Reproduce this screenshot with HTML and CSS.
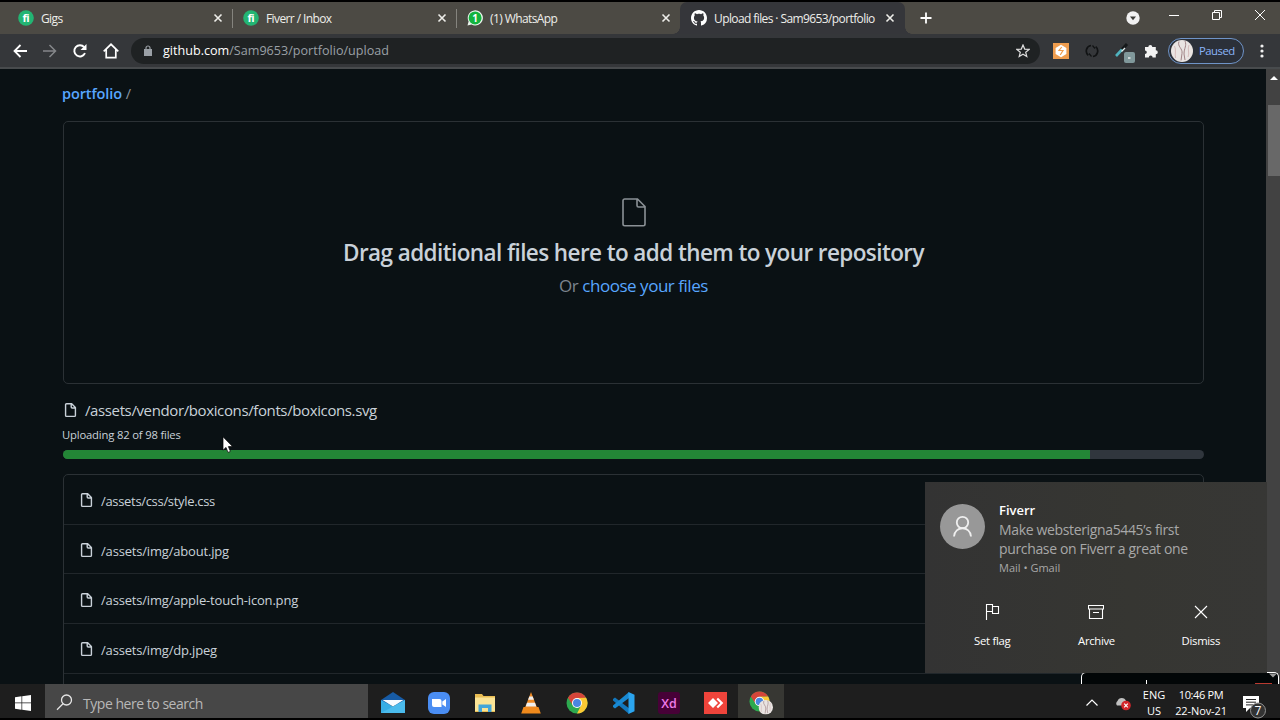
FILE: index.html
```html
<!DOCTYPE html>
<html lang="en">
<head>
  <meta charset="UTF-8" />
  <meta name="viewport" content="width=device-width, initial-scale=1.0"/>
  <title>Upload files · Sam9653/portfolio</title>
  <link rel="stylesheet" href="styles.css">
</head>
<body>
  <!-- shared icons -->
  <svg class="defs" width="0" height="0">
    <symbol id="file" viewBox="0 0 16 16">
      <path fill="currentColor" d="M3.75 1.5a.25.25 0 00-.25.25v11.5c0 .138.112.25.25.25h8.5a.25.25 0 00.25-.25V6H9.75A1.75 1.75 0 018 4.25V1.5H3.75zm5.75.56v2.19c0 .138.112.25.25.25h2.19L9.5 2.06zM2 1.75C2 .784 2.784 0 3.75 0h5.086c.464 0 .909.184 1.237.513l3.414 3.414c.329.328.513.773.513 1.237v8.086A1.75 1.75 0 0112.25 15h-8.5A1.75 1.75 0 012 13.25V1.75z"/>
    </symbol>
    <symbol id="close" viewBox="0 0 10 10">
      <path d="M1.5 1.5l7 7M8.5 1.5l-7 7" stroke="currentColor" stroke-width="1.6"/>
    </symbol>
    <symbol id="chrome" viewBox="0 0 22 22">
      <circle cx="11" cy="11" r="10.5" fill="#2da94f"/>
      <path d="M1.9 5.75A10.5 10.5 0 0 1 20.1 5.75L11 6.2 6.9 13.4z" fill="#d5453a"/>
      <path d="M20.1 5.75A10.5 10.5 0 0 1 11 21.5L15.2 13.3 11 6z" fill="#fcc934"/>
      <circle cx="11" cy="11" r="5" fill="#fff"/>
      <circle cx="11" cy="11" r="4" fill="#4a86e0"/>
    </symbol>
    <symbol id="avatar" viewBox="0 0 22 22">
      <circle cx="11" cy="11" r="11" fill="#e9e4e2"/>
      <path d="M8 1.500c-2 5 4 7 3 12l-1 7M14 1c2 5-1 7-1 13l1 6" fill="none" stroke="#a08386"/>
      <path d="M3.500 6c2 4 0 8 1 12M18 5c-2 4 1 8-1 12" fill="none" stroke="#cfb0b0" stroke-width=".8"/>
    </symbol>
  </svg>

  <div class="tabs">
    <div class="tab">
      <svg class="favicon" viewBox="0 0 16 16"><circle cx="8" cy="8" r="7.8" fill="#23b573"/><text x="7.800" y="12" text-anchor="middle" font-size="11" font-weight="bold" letter-spacing="-.4" fill="#fff">fi</text></svg>
      <span class="tab-title">Gigs</span>
      <svg class="close"><use href="#close"/></svg>
    </div>
    <div class="tab divided">
      <svg class="favicon" viewBox="0 0 16 16"><circle cx="8" cy="8" r="7.8" fill="#23b573"/><text x="7.800" y="12" text-anchor="middle" font-size="11" font-weight="bold" letter-spacing="-.4" fill="#fff">fi</text></svg>
      <span class="tab-title">Fiverr / Inbox</span>
      <svg class="close"><use href="#close"/></svg>
    </div>
    <div class="tab divided">
      <svg class="favicon" viewBox="0 0 16 16">
        <path d="M.5 15.500l1.100-4A7.600 7.600 0 1 1 4.500 14.500z" fill="#e9f5ec"/>
        <circle cx="8.100" cy="7.900" r="6.500" fill="#13b33d"/>
        <text x="8" y="11.500" text-anchor="middle" font-size="10" font-weight="bold" fill="#fff">1</text>
      </svg>
      <span class="tab-title">(1) WhatsApp</span>
      <svg class="close"><use href="#close"/></svg>
    </div>
    <div class="tab active">
      <svg class="favicon" viewBox="0 0 16 16">
        <path fill="#fff" d="M8 0C3.580 0 0 3.580 0 8c0 3.540 2.290 6.530 5.470 7.590.4.070.55-.17.55-.38 0-.19-.01-.82-.01-1.490-2.010.37-2.530-.49-2.690-.94-.09-.23-.48-.94-.82-1.130-.28-.15-.68-.52-.01-.53.63-.01 1.080.58 1.230.82.72 1.210 1.870.87 2.330.66.070-.52.28-.87.51-1.070-1.780-.2-3.640-.89-3.640-3.950 0-.87.31-1.590.82-2.150-.08-.2-.36-1.020.08-2.120 0 0 .67-.21 2.200.82.64-.18 1.320-.27 2-.27s1.360.09 2 .27c1.530-1.040 2.200-.82 2.200-.82.44 1.100.16 1.920.08 2.120.51.56.82 1.270.82 2.150 0 3.070-1.870 3.750-3.650 3.950.29.25.54.73.54 1.480 0 1.070-.01 1.930-.01 2.200 0 .21.15.46.55.38A8.010 8.010 0 0 0 16 8c0-4.420-3.580-8-8-8z"/>
      </svg>
      <span class="tab-title">Upload files · Sam9653/portfolio</span>
      <svg class="close"><use href="#close"/></svg>
    </div>
    <svg class="new-tab" viewBox="0 0 12 12"><path d="M6 .5v11M.5 6h11" stroke="#fff" stroke-width="1.800"/></svg>
    <div class="window-buttons">
      <svg width="14" height="14" viewBox="0 0 14 14"><circle cx="7" cy="7" r="6.700" fill="#f1f1f1"/><path d="M4 5.500h6L7 9.200z" fill="#3c3c38"/></svg>
      <svg class="raised" width="10" height="10" viewBox="0 0 10 10"><path d="M0 5.500h10" stroke="#fff"/></svg>
      <svg class="raised" width="10" height="10" viewBox="0 0 10 10"><path d="M.5 2.500h7v7h-7zM2.500 2.500v-2h7v7h-2" fill="none" stroke="#fff"/></svg>
      <svg class="raised" width="10" height="10" viewBox="0 0 10 10"><path d="M0 0l10 10M10 0L0 10" stroke="#fff"/></svg>
    </div>
  </div>

  <div class="toolbar">
    <div class="nav">
      <svg width="14" height="14" viewBox="0 0 14 14"><path d="M7.500 1L1.500 7l6 6M1.500 7H14" fill="none" stroke="#fff" stroke-width="1.800"/></svg>
      <svg width="14" height="14" viewBox="0 0 14 14"><path d="M6.500 1l6 6-6 6M12.500 7H0" fill="none" stroke="#85878a" stroke-width="1.500"/></svg>
      <svg width="14" height="14" viewBox="0 0 14 14"><path d="M12 9.200A5.600 5.600 0 1 1 11.200 3.200" fill="none" stroke="#fff" stroke-width="1.900"/><path d="M13.500 0v6h-6z" fill="#fff"/></svg>
      <svg width="16" height="16" viewBox="0 0 16 16"><path d="M.7 8.300L8 1.300l7.300 7M3.200 6.500v8.200h9.600V6.500" fill="none" stroke="#fff" stroke-width="1.700"/></svg>
    </div>
    <div class="address">
      <svg width="8" height="11" viewBox="0 0 8 11"><path d="M0 4h8v7H0z" fill="#9aa0a6"/><path d="M2 4.500V3a2 2 0 0 1 4 0v1.500" fill="none" stroke="#9aa0a6" stroke-width="1.200"/></svg>
      <span class="url"><b>github.com</b>/Sam9653/portfolio/upload</span>
      <svg class="star" width="14" height="14" viewBox="0 0 14 14"><path d="M7 1l1.700 4.100 4.400.3-3.400 2.900 1.100 4.300L7 10.300l-3.800 2.300 1.100-4.300L.9 5.400l4.400-.3z" fill="none" stroke="#dedede" stroke-width="1.200"/></svg>
    </div>
    <div class="extensions">
      <svg width="16" height="16" viewBox="0 0 16 16"><path d="M0 0h16v16H0z" fill="#ef9d4e"/><path d="M8 1.800l5.400 3.100v6.200L8 14.200l-5.400-3.100V4.900z" fill="#fff"/><path d="M8.800 4L6 7.500h4L7.200 12" fill="none" stroke="#ef9d4e" stroke-width="1.200"/></svg>
      <svg width="14" height="14" viewBox="0 0 14 14"><path d="M3.300 11.300A5.600 5.600 0 0 1 6 1.500M10.700 2.700A5.600 5.600 0 0 1 8 12.500" fill="none" stroke="#111314" stroke-width="1.700"/><path d="M7.500 1.500l2.500 3M6.500 12.500L4 9.500" stroke="#111314" stroke-width="1.200"/></svg>
      <svg class="picker" width="20" height="20" viewBox="0 0 20 20"><path d="M1 13l6.500-7" stroke="#4fb3bf" stroke-width="2.600"/><path d="M7 6.500L12 1" stroke="#15181a" stroke-width="3"/><path d="M6.500 8.500L10 5" stroke="#e4f2f2" stroke-width="1.200"/><rect x="9" y="9" width="11" height="11" rx="2" fill="#80989b"/><path d="M13 15h2.500" stroke="#fff" stroke-width="1.200"/></svg>
      <svg width="14" height="14" viewBox="0 0 14 14"><path d="M1 3h3.300a2 2 0 1 1 4 0h3.500v3.200a2 2 0 1 1 0 4V13.500H8.600a1.900 1.900 0 0 0-3.800 0H1V10a1.800 1.800 0 0 0 0-3.600z" fill="#f3f3f3"/></svg>
    </div>
    <div class="profile">
      <svg width="22" height="22"><use href="#avatar"/></svg>
      <span>Paused</span>
    </div>
    <svg class="menu" width="4" height="14" viewBox="0 0 4 14"><circle cx="2" cy="2" r="1.600" fill="#f1f1f1"/><circle cx="2" cy="7" r="1.600" fill="#f1f1f1"/><circle cx="2" cy="12" r="1.600" fill="#f1f1f1"/></svg>
  </div>

  <div class="viewport">
    <div class="page">
      <div class="breadcrumb"><a>portfolio</a> <span>/</span></div>

      <div class="dropzone">
        <svg width="24" height="29" viewBox="0 0 24 29"><path d="M2.700 1h12.800L23 8.500V26a1.700 1.700 0 0 1-1.700 1.700H2.700A1.700 1.700 0 0 1 1 26V2.700A1.700 1.700 0 0 1 2.700 1M15 1v6.500A1.500 1.500 0 0 0 16.500 9H23" fill="none" stroke="#8b9196" stroke-width="1.600"/></svg>
        <h2>Drag additional files here to add them to your repository</h2>
        <p>Or <a>choose your files</a></p>
      </div>

      <div class="current">
        <svg class="file-icon"><use href="#file"/></svg>
        <span>/assets/vendor/boxicons/fonts/boxicons.svg</span>
      </div>
      <div class="status">Uploading 82 of 98 files</div>
      <div class="progress"><div class="bar"></div></div>

      <ul class="files">
        <li><svg class="file-icon"><use href="#file"/></svg><span>/assets/css/style.css</span></li>
        <li><svg class="file-icon"><use href="#file"/></svg><span>/assets/img/about.jpg</span></li>
        <li><svg class="file-icon"><use href="#file"/></svg><span>/assets/img/apple-touch-icon.png</span></li>
        <li><svg class="file-icon"><use href="#file"/></svg><span>/assets/img/dp.jpeg</span></li>
        <li></li>
      </ul>
    </div>
    <div class="scrollbar">
      <svg width="8" height="4" viewBox="0 0 8 4"><path d="M0 4l4-4 4 4z" fill="#fff"/></svg>
      <div class="thumb"></div>
    </div>
  </div>

  <div class="taskbar">
    <div class="start">
      <svg width="16" height="16" viewBox="0 0 16 16"><path d="M0 2.200l6.500-.9v6.300H0zM7.200 1.200L16 0v7.600H7.200zM0 8.300h6.500v6.400L0 13.800zM7.200 8.300H16V16l-8.800-1.200z" fill="#fff"/></svg>
    </div>
    <div class="search">
      <svg width="17" height="17" viewBox="0 0 17 17"><circle cx="10.500" cy="6" r="5" fill="none" stroke="#e6e6e6" stroke-width="1.300"/><path d="M7 9.800L1 15.800" stroke="#e6e6e6" stroke-width="1.300"/></svg>
      <span>Type here to search</span>
    </div>
    <div class="apps">
      <div class="app"><svg width="24" height="22" viewBox="0 0 24 22"><path d="M0 8l12-8 12 8v5H0z" fill="#175ba5"/><path d="M0 8l12 6.500L24 8v13H0z" fill="#37aee5"/><path d="M1.500 8h21L12 14.500z" fill="#f6fbff"/><path d="M0 21L24 8v13z" fill="#57c3f0" opacity=".6"/></svg></div>
      <div class="app"><svg width="22" height="22" viewBox="0 0 22 22"><rect width="22" height="22" rx="6" fill="#4a8df2"/><path d="M4 7h7.500a2 2 0 0 1 2 2v6H6a2 2 0 0 1-2-2zM14.300 9.500L18 7v8l-3.700-2.500z" fill="#fff"/></svg></div>
      <div class="app"><svg width="22" height="20" viewBox="0 0 22 20"><path d="M1 1h7l1.500 2H21v16H1z" fill="#e9bd53"/><path d="M1 4.500h20V18H1z" fill="#fbe496"/><path d="M4.500 19v-7.500h13V19H14v-4H8v4z" fill="#43a5d8"/></svg></div>
      <div class="app"><svg width="20" height="22" viewBox="0 0 20 22"><path d="M10 0L3.500 17h13z" fill="#ef8a24"/><path d="M8.300 4.500h3.400l1.200 3.300H7.100zM6 10.800h8l1.300 3.700H4.700z" fill="#eee"/><path d="M2.500 15h2q5.500 3 11 0h2L19.800 21.500H.2z" fill="#f08a1c"/></svg></div>
      <div class="app"><svg width="22" height="22"><use href="#chrome"/></svg></div>
      <div class="app"><svg width="23" height="22" viewBox="0 0 23 22"><path d="M1 7l2-1.500 14 10.700V22L1 8.500z" fill="#1277bd"/><path d="M1 15l2 1.500L17 6V0L1 13.500z" fill="#1889d3"/><path d="M16.500 0L22.500 2.800v16.400L16.500 22z" fill="#2ba4ee"/></svg></div>
      <div class="app"><svg width="22" height="22" viewBox="0 0 22 22"><rect width="22" height="22" rx="3" fill="#470137"/><text x="11" y="15.500" text-anchor="middle" font-size="12.500" font-weight="600" fill="#f07ae8">Xd</text></svg></div>
      <div class="app"><svg width="23" height="22" viewBox="0 0 23 22"><path d="M0 0h23v22H0z" fill="#ef443b"/><path d="M9 6l5 5-5 5-5-5zM12.500 7.200L14 5.700l5.300 5.300-5.300 5.300-1.500-1.500L16.300 11z" fill="#fff"/></svg></div>
      <div class="app running">
        <svg width="24" height="24" viewBox="0 0 24 24"><use href="#chrome" width="21" height="21"/><use href="#avatar" x="9.500" y="9" width="14.500" height="14.500"/></svg>
      </div>
    </div>
    <div class="tray">
      <svg class="chevron" width="12" height="7" viewBox="0 0 12 7"><path d="M.5 6.500L6 1l5.500 5.500" fill="none" stroke="#fff" stroke-width="1.200"/></svg>
      <svg class="cloud" width="16" height="14" viewBox="0 0 16 14"><path d="M2 8.500A3 3 0 0 1 2.500 4 4.500 4.500 0 0 1 11 4l2 4.500z" fill="#c0c0c0"/><circle cx="11" cy="8.500" r="4.800" fill="#d3262b"/><path d="M9.200 6.700l3.600 3.600M12.800 6.700l-3.600 3.600" stroke="#fff" stroke-width="1.200"/></svg>
      <div class="lang">ENG<br>US</div>
      <div class="clock"><span class="time">10:46 PM</span><br><span class="date">22-Nov-21</span></div>
      <svg class="action" width="24" height="24" viewBox="0 0 24 24"><path d="M0 1h16v12H7l-4 4v-4H0z" fill="#fff"/><path d="M3 4.500h10M3 7.200h10M3 9.900h7" stroke="#242424"/><circle cx="15" cy="15.500" r="7.500" fill="#333" stroke="#929292"/><text x="15" y="20" text-anchor="middle" font-size="12" fill="#fff">7</text></svg>
    </div>
  </div>

  <!-- corner of the window that sits behind the taskbar -->
  <div class="behind">
    <div class="tick"></div>
    <div class="red-line"></div>
    <svg width="8" height="5" viewBox="0 0 8 5"><path d="M0 .5h8L4 4.500z" fill="#9a9a9a"/></svg>
  </div>

  <div class="toast">
    <div class="message">
      <svg class="person" width="45" height="45" viewBox="0 0 45 45"><circle cx="22.500" cy="22.500" r="22.500" fill="#989898"/><circle cx="22.500" cy="18.500" r="5.700" fill="none" stroke="#efefef" stroke-width="1.800"/><path d="M14 32.500c.5-11 16.500-11 17 0" fill="none" stroke="#efefef" stroke-width="1.800"/></svg>
      <div class="text">
        <div class="sender">Fiverr</div>
        <div class="line">Make websterigna5445’s first</div>
        <div class="line">purchase on Fiverr a great one</div>
        <div class="source">Mail • Gmail</div>
      </div>
    </div>
    <div class="actions">
      <div class="action-item">
        <svg width="16" height="16" viewBox="0 0 16 16"><path d="M2.500 16V.5h6v7h-6M8.500 2.500h6v7h-6v-2" fill="none" stroke="#fff" stroke-width="1.100"/></svg>
        <span>Set flag</span>
      </div>
      <div class="action-item">
        <svg width="16" height="16" viewBox="0 0 16 16"><path d="M.5 1.500h15v3.500H.5zM1.500 5v9.500h13V5M5 8.500h6" fill="none" stroke="#fff" stroke-width="1.100"/></svg>
        <span>Archive</span>
      </div>
      <div class="action-item">
        <svg width="16" height="16" viewBox="0 0 16 16"><path d="M2 2l12 12M14 2L2 14" stroke="#fff" stroke-width="1.100"/></svg>
        <span>Dismiss</span>
      </div>
    </div>
  </div>

  <svg class="cursor" width="12" height="18" viewBox="0 0 12 18"><path d="M1 .8v13.400l3-2.800 2 5 2.400-1-2-4.800h4.200z" fill="#fff" stroke="#000" stroke-width=".7"/></svg>
</body>
</html>
```
FILE: styles.css
```css
* {
  box-sizing: border-box;
}
body {
  margin: 0;
  width: 1280px;
  height: 720px;
  overflow: hidden;
  display: flex;
  flex-direction: column;
  padding: 2px 0;
  background: #000;
  color: #c9d1d9;
  font-family: "Open Sans", "Noto Sans", sans-serif;
}
svg {
  display: block;
  flex-shrink: 0;
}
span, .status, .line, .sender, .source {
  white-space: nowrap;
}
.defs {
  position: absolute;
}

/* tab strip */
.tabs {
  height: 32px;
  flex-shrink: 0;
  display: flex;
  padding-left: 8px;
  background: #4c4a44;
}
.tab {
  width: 224px;
  display: flex;
  align-items: center;
  padding: 0 9px 0 10px;
  color: #eeeeea;
  font-size: 12px;
  position: relative;
}
.tab-title {
  letter-spacing: -0.6px;
}
.divided::before {
  content: "";
  width: 1px;
  height: 19px;
  background: #85847e;
  position: absolute;
  left: 0;
  top: 7px;
}
.tab.divided {
  padding-left: 11px;
}
.tab.active {
  width: 225px;
  padding-left: 11px;
  padding-right: 10px;
  background: #35363a;
  border-radius: 7px 7px 0 0;
}
.active::before, .active::after {
  content: "";
  width: 7px;
  height: 7px;
  position: absolute;
  bottom: 0;
}
.active::before {
  left: -7px;
  background: radial-gradient(circle at 0 0, transparent 6.5px, #35363a 7px);
}
.active::after {
  right: -7px;
  background: radial-gradient(circle at 100% 0, transparent 6.5px, #35363a 7px);
}
.favicon {
  width: 16px;
  height: 16px;
  margin-right: 7px;
}
.close {
  width: 10px;
  height: 10px;
  margin-left: auto;
}
.new-tab {
  width: 12px;
  height: 12px;
  margin: 10px 0 0 15px;
}
.window-buttons {
  display: flex;
  margin: 9px 15px 0 auto;
  gap: 33px;
}
.window-buttons svg:first-child {
  margin-right: -4px;
}
.raised {
  margin-top: -1px;
}

/* toolbar */
.toolbar {
  height: 35px;
  flex-shrink: 0;
  display: flex;
  align-items: center;
  background: #35373a;
  border-bottom: 2px solid #484b4d;
  padding-left: 13px;
}
.nav {
  display: flex;
  align-items: center;
  gap: 16px;
}
.address {
  width: 909px;
  height: 26px;
  margin-left: 12px;
  border-radius: 13px;
  background: #1f2223;
  display: flex;
  align-items: center;
  padding: 0 10px 0 13px;
}
.url {
  margin-left: 11px;
  font-size: 12.6px;
  color: #9aa0a6;
}
.url b {
  font-weight: normal;
  color: #fff;
}
.star {
  margin-left: auto;
}
.extensions {
  display: flex;
  align-items: center;
  margin-left: 13px;
}
.extensions svg {
  margin-right: 16px;
}
.extensions .picker {
  margin: 5px 9px 0 0;
}
.extensions svg:last-child {
  margin-right: 10px;
}
.profile {
  width: 76px;
  height: 26px;
  border: 1px solid #6f94c8;
  border-radius: 13px;
  background: #2b3039;
  display: flex;
  align-items: center;
  padding-left: 2px;
  color: #8ab4f8;
  font-size: 11.3px;
  letter-spacing: -0.5px;
}
.profile span {
  margin-left: 6px;
}
.menu {
  margin-left: 16px;
}

/* page */
.viewport {
  height: 615px;
  flex-shrink: 0;
  display: flex;
  overflow: hidden;
  background: #0a1114;
}
.page {
  width: 1266px;
  padding: 15px 62px 0 63px;
}
.breadcrumb {
  height: 20px;
  line-height: 20px;
  margin-left: -1px;
  font-size: 14.5px;
  letter-spacing: -0.1px;
  color: #8b949e;
}
.breadcrumb a {
  color: #58a6ff;
  font-weight: 600;
}
.dropzone {
  height: 263px;
  margin-top: 17px;
  border: 1px solid #2b3135;
  border-radius: 5px;
  display: flex;
  flex-direction: column;
  align-items: center;
  padding-top: 76px;
}
.dropzone h2 {
  margin: 10px 0 0;
  font-size: 22.5px;
  font-weight: 600;
  line-height: 32px;
  letter-spacing: -0.59px;
  white-space: nowrap;
}
.dropzone p {
  margin: 5px 0 0;
  font-size: 17px;
  line-height: 24px;
  letter-spacing: -0.47px;
  color: #7d858e;
}
.dropzone a {
  color: #58a6ff;
}
.file-icon {
  width: 15px;
  height: 15px;
}
.current {
  height: 22px;
  margin-top: 15px;
  display: flex;
  align-items: center;
  font-size: 15px;
  letter-spacing: -0.38px;
}
.current span {
  margin-left: 7px;
}
.status {
  margin: 6px 0 0 -1px;
  height: 16px;
  line-height: 16px;
  font-size: 11.25px;
  letter-spacing: -0.17px;
}
.progress {
  height: 9px;
  margin-top: 7px;
  background: #30363d;
  border-radius: 5px;
  overflow: hidden;
}
.bar {
  width: 90%;
  height: 100%;
  background: #238636;
}
.files {
  list-style: none;
  margin: 15px 0 0;
  padding: 0;
  border: 1px solid #2b3135;
  border-radius: 5px;
}
.files li {
  height: 49.7px;
  padding: 3px 0 0 15px;
  display: flex;
  align-items: center;
  border-bottom: 1px solid #21272b;
  font-size: 13px;
  letter-spacing: -0.18px;
}
.files li:first-child {
  letter-spacing: -0.32px;
}
.files span {
  margin-left: 7px;
}
.scrollbar {
  width: 14px;
  background: #424242;
  display: flex;
  flex-direction: column;
  align-items: flex-end;
}
.scrollbar svg {
  margin: 7px 2px 0 0;
}
.thumb {
  width: 12px;
  height: 71px;
  margin-top: 25px;
  background: #686868;
}

/* taskbar */
.taskbar {
  height: 34px;
  flex-shrink: 0;
  display: flex;
  background: #1e1e1e;
}
.start {
  width: 45px;
  display: flex;
  align-items: center;
  padding: 3px 0 0 15px;
}
.search {
  width: 323px;
  flex-shrink: 0;
  background: #474747;
  display: flex;
  align-items: center;
  padding: 3px 0 0 11px;
  color: #b8b8b8;
  font-size: 14px;
  letter-spacing: -0.47px;
}
.search span {
  margin: 2px 0 0 10px;
}
.apps {
  display: flex;
  flex-shrink: 0;
  padding-left: 2px;
}
.app {
  width: 46px;
  display: flex;
  align-items: center;
  justify-content: center;
  padding-top: 3px;
}
.running {
  background: #373733;
}
.tray {
  flex: 1;
  display: flex;
  align-items: center;
  padding: 3px 13px 0 302px;
  color: #fff;
  font-size: 11px;
  line-height: 16px;
  text-align: center;
}
.cloud {
  margin: 3px 0 0 17px;
}
.lang {
  width: 24px;
  margin-left: 11px;
}
.clock {
  width: 56px;
  margin-left: 7px;
}
.time {
  letter-spacing: -0.35px;
}
.date {
  letter-spacing: -0.1px;
}
.action {
  margin: 9px 0 0 auto;
}

/* window edge under the notification */
.behind {
  position: absolute;
  left: 1081px;
  top: 672px;
  width: 198px;
  height: 12px;
  border: 1px solid #fff;
  border-bottom: 0;
  border-radius: 5px 5px 0 0;
  background: #020607;
  display: flex;
  align-items: flex-end;
}
.tick {
  width: 1px;
  height: 4px;
  margin-left: 64px;
  background: #fff;
}
.red-line {
  width: 17px;
  height: 1px;
  margin-left: 108px;
  background: #b83a30;
}
.behind svg {
  margin: 0 0 6px -3px;
}

/* mail notification */
.toast {
  position: absolute;
  left: 925px;
  top: 482px;
  width: 342px;
  height: 191px;
  background: linear-gradient(90deg, #333, #363632 60%, #373735);
}
.message {
  display: flex;
  padding: 19px 0 0 15px;
}
.person {
  margin-top: 3px;
}
.text {
  margin-left: 14px;
}
.sender {
  color: #fff;
  font-size: 13px;
  font-weight: 600;
  line-height: 19px;
}
.line {
  color: #a8a8a8;
  font-size: 14px;
  line-height: 19px;
  letter-spacing: -0.35px;
}
.source {
  color: #a8a8a8;
  font-size: 11px;
  line-height: 19px;
}
.actions {
  display: flex;
  padding: 27px 14px 0 15px;
}
.action-item {
  flex: 1;
  display: flex;
  flex-direction: column;
  align-items: center;
  color: #fff;
  font-size: 11.3px;
  line-height: 16px;
  letter-spacing: -0.3px;
}
.action-item span {
  margin-top: 13px;
}
.cursor {
  position: absolute;
  left: 222px;
  top: 436px;
}
```
